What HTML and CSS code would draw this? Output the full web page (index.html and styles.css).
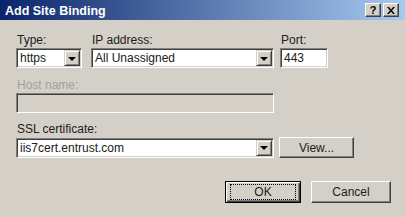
FILE: index.html
```html
<!DOCTYPE html>
<html lang="en">

<head>
    <meta charset="UTF-8">
    <title>Add Site Binding</title>
    <link rel="stylesheet" href="styles.css">
</head>

<body>

    <div class="dialog">
        <div class="titlebar">
            <span class="title">Add Site Binding</span>
            <div class="title-buttons">
                <span class="tbtn help">?</span>
                <span class="tbtn close">
                    <svg width="8" height="7" viewBox="0 0 8 7">
                        <path d="M0 0h2l2 2.5L6 0h2L5 3.5 8 7H6L4 4.5 2 7H0l3-3.5z" fill="#000"/>
                    </svg>
                </span>
            </div>
        </div>

        <div class="content">
            <!-- type / ip / port -->
            <div class="row">
                <div class="field type-field">
                    <label>Type:</label>
                    <div class="combo"><span class="value">https</span><span class="drop"><i></i></span></div>
                </div>
                <div class="field ip-field">
                    <label>IP address:</label>
                    <div class="combo"><span class="value">All Unassigned</span><span class="drop"><i></i></span></div>
                </div>
                <div class="field port-field">
                    <label>Port:</label>
                    <div class="textbox"><span class="value">443</span></div>
                </div>
            </div>

            <div class="field host-field">
                <label class="disabled">Host name:</label>
                <div class="textbox disabled-box"></div>
            </div>

            <div class="field ssl-field">
                <label>SSL certificate:</label>
                <div class="ssl-row">
                    <div class="combo ssl-combo"><span class="value">iis7cert.entrust.com</span><span class="drop"><i></i></span></div>
                    <button class="btn view-btn">View...</button>
                </div>
            </div>

            <div class="actions">
                <button class="btn default"><span class="focus">OK</span></button>
                <button class="btn cancel-btn">Cancel</button>
            </div>
        </div>
    </div>

</body>

</html>
```

FILE: styles.css
```css
body {
    margin: 0;
    padding: 0;
    background-color: #d4d0c8;
    font-family: "Liberation Sans", Arial, sans-serif;
    font-size: 12px;
    color: #000;
}

.dialog {
    width: 405px;
    height: 217px;
    background-color: #d4d0c8;
}

.titlebar {
    height: 20px;
    display: flex;
    align-items: center;
    justify-content: space-between;
    padding: 0 6px 0 5px;
    background: linear-gradient(to right, #0a246a, #a6caf0);
}

.title {
    color: #fff;
    font-weight: bold;
    font-size: 12.5px;
    padding-top: 1px;
}

.title-buttons {
    display: flex;
    gap: 2px;
}

.tbtn {
    width: 14px;
    height: 12px;
    display: flex;
    align-items: center;
    justify-content: center;
    background-color: #d4d0c8;
    border: 1px solid;
    border-color: #fff #404040 #404040 #fff;
    box-shadow: inset -1px -1px #808080;
}

.help {
    font-weight: bold;
    font-size: 11px;
    line-height: 12px;
}

.content {
    padding: 13px 0 0 16px;
}

.row {
    display: flex;
}

label {
    display: block;
    height: 14px;
    line-height: 14px;
    margin-bottom: 1px;
    padding-left: 1px;
    color: #202020;
}

label.disabled {
    color: #a0a0a0;
}

.combo,
.textbox {
    box-sizing: border-box;
    height: 20px;
    display: flex;
    align-items: center;
    background-color: #fff;
    border: 1px solid;
    border-color: #808080 #fff #fff #808080;
    box-shadow: inset 1px 1px #404040, inset -1px -1px #d4d0c8;
}

.value {
    flex: 1;
    padding-left: 3px;
    line-height: 16px;
    white-space: nowrap;
    color: #202020;
}

.drop {
    box-sizing: border-box;
    width: 16px;
    height: 16px;
    margin-right: 1px;
    display: flex;
    align-items: center;
    justify-content: center;
    background-color: #d4d0c8;
    border: 1px solid;
    border-color: #d4d0c8 #404040 #404040 #d4d0c8;
    box-shadow: inset 1px 1px #fff, inset -1px -1px #808080;
}

.drop i {
    width: 0;
    height: 0;
    border-left: 4px solid transparent;
    border-right: 4px solid transparent;
    border-top: 4px solid #000;
    margin-top: 1px;
}

.type-field .combo {
    width: 66px;
}

.ip-field {
    margin-left: 9px;
}

.ip-field .combo {
    width: 183px;
}

.port-field {
    margin-left: 6px;
}

.port-field .textbox {
    width: 48px;
}

.host-field {
    margin-top: 10px;
}

.host-field .textbox {
    width: 258px;
}

.disabled-box {
    background-color: #d4d0c8;
}

.ssl-field {
    margin-top: 9px;
}

.ssl-row {
    display: flex;
    align-items: center;
}

.ssl-combo {
    width: 258px;
}

.btn {
    box-sizing: border-box;
    font-family: inherit;
    font-size: 12px;
    color: #202020;
    background-color: #d4d0c8;
    border: 1px solid;
    border-color: #fff #404040 #404040 #fff;
    box-shadow: inset -1px -1px #808080;
    padding: 0;
}

.view-btn {
    width: 75px;
    height: 21px;
    margin-left: 5px;
}

.actions {
    display: flex;
    margin-top: 23px;
    margin-left: 209px;
    gap: 10px;
}

.actions .btn {
    height: 22px;
}

.btn.default {
    width: 76px;
    border: 1px solid #000;
    box-shadow: inset 1px 1px #fff, inset -1px -1px #404040, inset -2px -2px #808080;
    display: flex;
    align-items: center;
    justify-content: center;
}

.focus {
    display: block;
    width: 64px;
    height: 14px;
    line-height: 14px;
    border: 1px dotted #000;
}

.cancel-btn {
    width: 80px;
}
```
